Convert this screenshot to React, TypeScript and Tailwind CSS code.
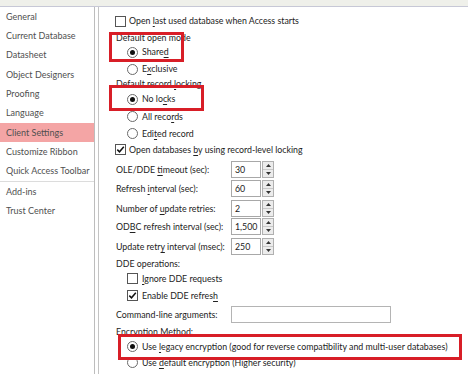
import React from "react";

const Checkbox = ({ checked }: { checked?: boolean }) => (
  <span className="flex h-[11px] w-[11px] shrink-0 items-center justify-center border border-[#555] bg-white">
    {checked && (
      <svg width="9" height="9" viewBox="0 0 9 9">
        <path d="M1.3 4.6 L3.5 6.8 L7.8 1.8" fill="none" stroke="#111" strokeWidth="1.5" />
      </svg>
    )}
  </span>
);

const Radio = ({ checked }: { checked?: boolean }) => (
  <span className="flex h-[11px] w-[11px] shrink-0 items-center justify-center rounded-full border border-[#6a6a6a] bg-white">
    {checked && <span className="h-[5px] w-[5px] rounded-full bg-[#111]" />}
  </span>
);

const Spinner = ({ value }: { value: string }) => (
  <div className="flex h-[17px] w-[43px] shrink-0 gap-[1px]">
    <div className="flex flex-1 items-center border border-[#a8a8a8] bg-white pl-[3px]">{value}</div>
    <div className="flex w-[12px] flex-col border border-[#b0b0b0] bg-[#ececec]">
      <div className="flex flex-1 items-center justify-center border-b border-[#c8c8c8]">
        <svg width="5" height="3" viewBox="0 0 5 3">
          <path d="M0 3 L2.5 0 L5 3 Z" fill="#333" />
        </svg>
      </div>
      <div className="flex flex-1 items-center justify-center">
        <svg width="5" height="3" viewBox="0 0 5 3">
          <path d="M0 0 L2.5 3 L5 0 Z" fill="#333" />
        </svg>
      </div>
    </div>
  </div>
);

const U = ({ children }: { children: React.ReactNode }) => (
  <span className="underline decoration-[0.8px] underline-offset-[1.5px]">{children}</span>
);

const sideItems = [
  "General",
  "Current Database",
  "Datasheet",
  "Object Designers",
  "Proofing",
  "Language",
  "Client Settings",
  "Customize Ribbon",
  "Quick Access Toolbar",
];

export default function App() {
  return (
    <div
      className="relative flex h-[374px] w-[474px] flex-col overflow-hidden bg-white text-[8.8px] text-[#222]"
      style={{ fontFamily: "Lato, 'Open Sans', sans-serif" }}
    >
      <div className="h-[7px] w-[468px] shrink-0 border-b border-[#c7c8d6] bg-[#eff0ea]" />
      <div className="flex flex-1">
        <div className="flex w-[95px] shrink-0 flex-col border-r border-[#bdbdbd] text-[9px] text-[#505050]">
          {sideItems.map((s) => (
            <div
              key={s}
              className={
                s === "Client Settings"
                  ? "flex h-[19.3px] items-center bg-[#f4a5a5] pl-[6px]"
                  : "flex h-[19.3px] items-center pl-[6px]"
              }
            >
              {s}
            </div>
          ))}
          <div className="h-[1px] w-full bg-[#dcdcdc]" />
          <div className="flex h-[19.3px] items-center pl-[6px]">Add-ins</div>
          <div className="flex h-[19.3px] items-center pl-[6px]">Trust Center</div>
        </div>
        <div className="ml-[3px] flex flex-1 flex-col border-l border-[#c4c4c4] pl-[17px]">
          <div className="mt-[7px] flex h-[14px] items-center gap-[3px] -ml-[1px]">
            <Checkbox />
            <span>
              Open <U>l</U>ast used database when Access starts
            </span>
          </div>
          <div className="mt-[2.5px] flex h-[14px] items-center">Default open mode</div>
          <div className="mt-[0.5px] flex h-[14px] items-center gap-[4px] pl-[11px]">
            <Radio checked />
            <span>
              Share<U>d</U>
            </span>
          </div>
          <div className="mt-[3px] flex h-[14px] items-center gap-[4px] pl-[11px]">
            <Radio />
            <span>
              E<U>x</U>clusive
            </span>
          </div>
          <div className="mt-[0.5px] flex h-[14px] items-center">
            <span>
              Default record <U>l</U>ocking
            </span>
          </div>
          <div className="mt-[1.5px] flex h-[14px] items-center gap-[4px] pl-[11px]">
            <Radio checked />
            <span>
              No lo<U>c</U>ks
            </span>
          </div>
          <div className="mt-[3.5px] flex h-[14px] items-center gap-[4px] pl-[11px]">
            <Radio />
            <span>
              All reco<U>r</U>ds
            </span>
          </div>
          <div className="mt-[2.8px] flex h-[14px] items-center gap-[4px] pl-[11px]">
            <Radio />
            <span>
              Edi<U>t</U>ed record
            </span>
          </div>
          <div className="mt-[2.7px] flex h-[14px] items-center gap-[3px] -ml-[1px]">
            <Checkbox checked />
            <span>
              Open databases <U>b</U>y using record-level locking
            </span>
          </div>
          <div className="mt-[4.5px] flex h-[17px] items-center">
            <span className="w-[115px]">
              OLE/DDE <U>t</U>imeout (sec):
            </span>
            <Spinner value="30" />
          </div>
          <div className="mt-[2px] flex h-[17px] items-center">
            <span className="w-[115px]">
              Refresh <U>i</U>nterval (sec):
            </span>
            <Spinner value="60" />
          </div>
          <div className="mt-[2.5px] flex h-[17px] items-center">
            <span className="w-[115px]">
              Number of <U>u</U>pdate retries:
            </span>
            <Spinner value="2" />
          </div>
          <div className="mt-[1.5px] flex h-[17px] items-center">
            <span className="w-[115px]">
              OD<U>B</U>C refresh interval (sec):
            </span>
            <Spinner value="1,500" />
          </div>
          <div className="mt-[3px] flex h-[17px] items-center">
            <span className="w-[115px]">
              Update retr<U>y</U> interval (msec):
            </span>
            <Spinner value="250" />
          </div>
          <div className="mt-[1.5px] flex h-[14px] items-center">DDE operations:</div>
          <div className="mt-[1px] flex h-[14px] items-center gap-[4px] pl-[11px]">
            <Checkbox />
            <span>
              <U>I</U>gnore DDE requests
            </span>
          </div>
          <div className="mt-[3px] flex h-[14px] items-center gap-[4px] pl-[11px]">
            <Checkbox checked />
            <span>
              Enable DDE refres<U>h</U>
            </span>
          </div>
          <div className="mt-[3.5px] flex h-[17px] items-center">
            <span className="w-[115px]">Command-line arguments:</span>
            <div className="h-[17px] w-[160px] border border-[#b4b4b4] bg-white" />
          </div>
          <div className="mt-[1.5px] flex h-[14px] items-center">Encryption Method:</div>
          <div className="mt-[1px] flex h-[14px] items-center gap-[4px] pl-[11px]">
            <Radio checked />
            <span>
              Use <U>l</U>egacy encryption (good for reverse compatibility and multi-user databases)
            </span>
          </div>
          <div className="mt-[2px] flex h-[14px] items-center gap-[4px] pl-[11px]">
            <Radio />
            <span>
              Use <U>d</U>efault encryption (Higher security)
            </span>
          </div>
        </div>
      </div>

      <div className="pointer-events-none absolute left-[109px] top-[32px] h-[30px] w-[75px] border-[3px] border-[#d81e27]" />
      <div className="pointer-events-none absolute left-[109px] top-[85px] h-[26px] w-[95px] border-[3px] border-[#d81e27]" />
      <div className="pointer-events-none absolute left-[118px] top-[334px] h-[26px] w-[344px] border-[3px] border-[#d81e27]" />
    </div>
  );
}
